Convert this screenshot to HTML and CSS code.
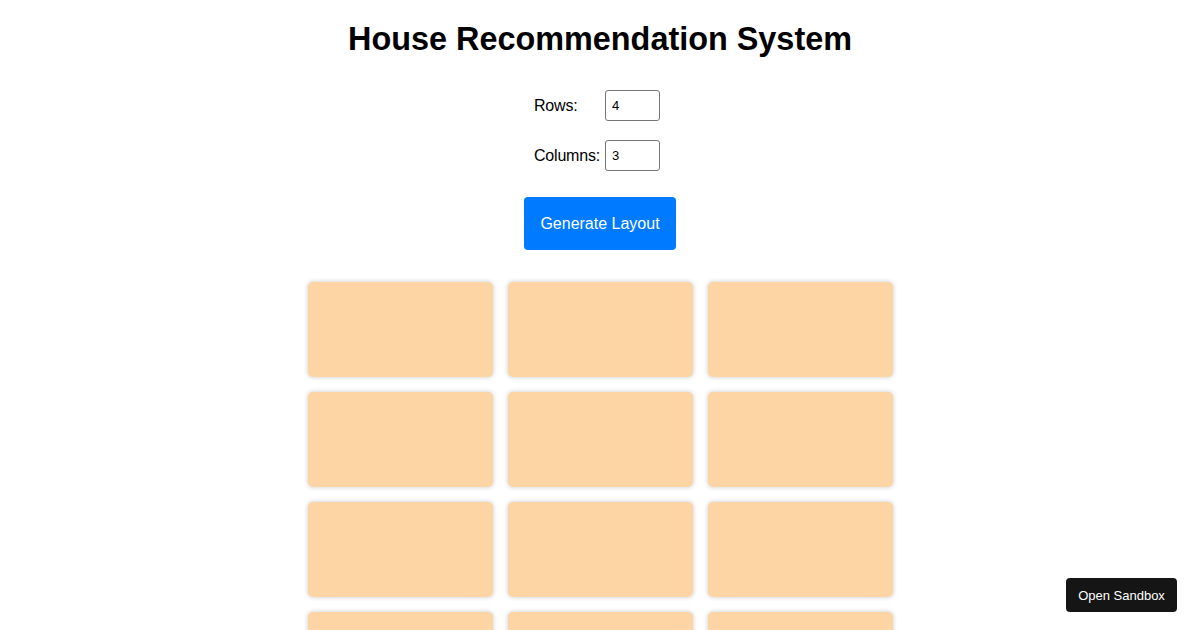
FILE: index.html
```html
<!DOCTYPE html>
<html>
<head>
<meta charset="utf-8">
<link rel="stylesheet" href="styles.css">
</head>
<body>
<div class="app">
  <h1 class="title">House Recommendation System</h1>
  <div class="controls">
    <div class="field">
      <label class="field-label">Rows:</label>
      <input class="field-input" type="number" value="4">
    </div>
    <div class="field">
      <label class="field-label">Columns:</label>
      <input class="field-input" type="number" value="3">
    </div>
  </div>
  <button class="generate">Generate Layout</button>
  <div class="grid">
    <div class="house"></div><div class="house"></div><div class="house"></div>
    <div class="house"></div><div class="house"></div><div class="house"></div>
    <div class="house"></div><div class="house"></div><div class="house"></div>
    <div class="house"></div><div class="house"></div><div class="house"></div>
  </div>
</div>
<button class="sandbox">Open Sandbox</button>
</body>
</html>
```
FILE: styles.css
```css
html, body {
  margin: 0;
  padding: 0;
  background: #ffffff;
  overflow: hidden;
}
body {
  font-family: "Liberation Sans", Arial, sans-serif;
  color: #000;
}
.app {
  display: flex;
  flex-direction: column;
  align-items: center;
  padding-top: 21px;
}
.title {
  font-size: 32.4px;
  font-weight: bold;
  margin: 0;
  line-height: 37px;
  height: 40px;
}
.controls {
  display: flex;
  flex-direction: column;
  gap: 19px;
  margin-top: 29px;
  padding-right: 6px;
}
.field {
  display: flex;
  align-items: center;
}
.field-label {
  width: 71px;
  font-size: 16px;
  letter-spacing: -0.2px;
}
.field-input {
  box-sizing: border-box;
  width: 55px;
  height: 31px;
  padding: 0 6px;
  border: 1px solid #767676;
  border-radius: 3px;
  font-family: "Liberation Sans", Arial, sans-serif;
  font-size: 13px;
  -moz-appearance: textfield;
}
.field-input::-webkit-inner-spin-button,
.field-input::-webkit-outer-spin-button {
  -webkit-appearance: none;
  margin: 0;
}
.generate {
  margin-top: 26px;
  width: 152px;
  height: 53px;
  padding: 0;
  border: none;
  border-radius: 4px;
  background: #007bff;
  color: #fff;
  font-family: "Liberation Sans", Arial, sans-serif;
  font-size: 16px;
}
.grid {
  margin-top: 32px;
  display: grid;
  grid-template-columns: repeat(3, 185px);
  grid-auto-rows: 95px;
  gap: 15px;
}
.house {
  background: #fdd5a5;
  border-radius: 5px;
  box-shadow: 0 0 5px rgba(0, 0, 0, 0.22);
}
.sandbox {
  position: fixed;
  right: 23px;
  bottom: 18px;
  width: 111px;
  height: 34px;
  padding: 0;
  border: none;
  border-radius: 4px;
  background: #151515;
  color: #fff;
  font-family: "Liberation Sans", Arial, sans-serif;
  font-size: 13px;
}
```
